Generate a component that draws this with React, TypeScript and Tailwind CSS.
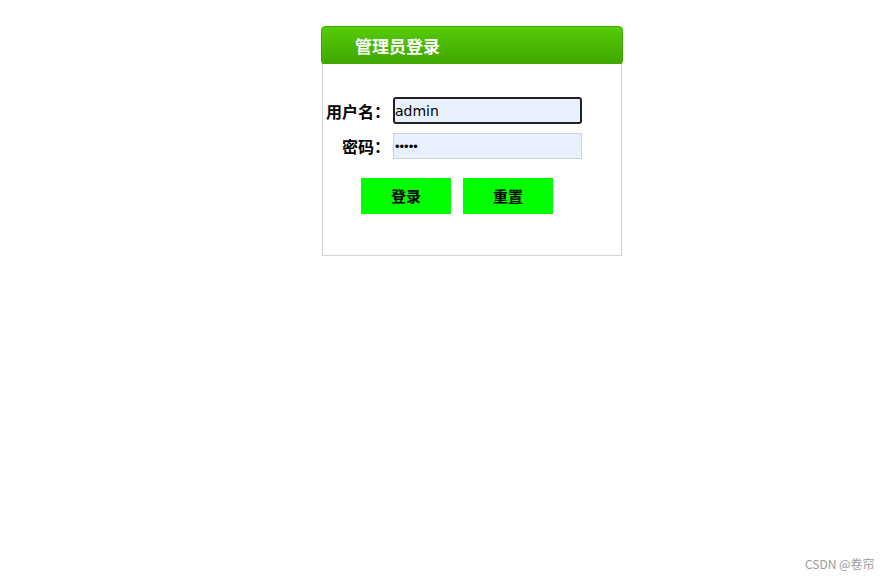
export default function App() {
  const font = { fontFamily: '"Noto Sans CJK SC", "Liberation Sans", sans-serif' };

  return (
    <div className="relative h-[579px] w-[888px] bg-white" style={font}>
      {/* Login box */}
      <div className="absolute left-[321px] top-[26px] w-[302px]">
        <div className="flex h-[39px] items-center rounded-[4px] border border-[#3fa800] bg-gradient-to-b from-[#55cc08] to-[#3ea600] pl-[33px]">
          <span className="-mt-[1px] text-[17px] font-bold leading-none text-white">管理员登录</span>
        </div>
        <div className="mx-[1px] -mt-[1px] h-[192px] border border-t-0 border-[#d4d4d4] bg-white pt-[33px]">
          <div className="flex items-center">
            <label className="w-[67px] text-right text-[16px] font-bold leading-none text-black">用户名：</label>
            <input
              defaultValue="admin"
              className="ml-[3px] h-[27px] w-[189px] rounded-[3px] border-2 border-[#222] bg-[#e8f0fe] px-0 text-[14px] text-black outline-none"
              style={{ fontFamily: '"DejaVu Sans", sans-serif' }}
            />
          </div>
          <div className="mt-[9px] flex items-center">
            <label className="w-[67px] text-right text-[16px] font-bold leading-none text-black">密码：</label>
            <input
              type="password"
              defaultValue="admin"
              className="ml-[3px] h-[26px] w-[189px] border border-[#c9d3e2] bg-[#e8f0fe] px-[1px] text-[13px] text-black outline-none"
              style={{ fontFamily: '"Liberation Sans", sans-serif' }}
            />
          </div>
          <div className="mt-[19px] flex gap-[12px] pl-[38px]">
            <button className="h-[36px] w-[90px] bg-[#00ff00] text-[15px] font-bold text-black">登录</button>
            <button className="h-[36px] w-[90px] bg-[#00ff00] text-[15px] font-bold text-black">重置</button>
          </div>
        </div>
      </div>

      <div className="absolute left-[805px] top-[555px] text-[12px] text-[#9a9a9a]">CSDN @卷帘</div>
    </div>
  );
}
